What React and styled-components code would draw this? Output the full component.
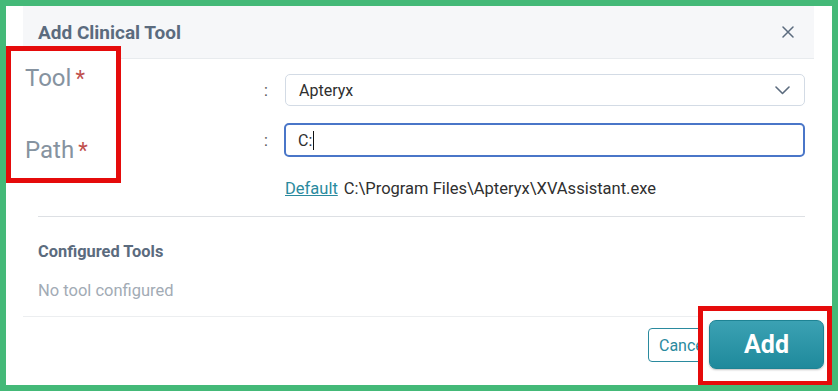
import React from 'react'
import styled, { createGlobalStyle } from 'styled-components'

const GlobalStyles = createGlobalStyle`
  * { box-sizing: border-box; }
  body {
    margin: 0;
    font-family: Roboto, "Liberation Sans", Arial, sans-serif;
    background: #ffffff;
  }
`

const Frame = styled.div`
  position: relative;
  width: 838px;
  height: 391px;
  border: 6px solid #44b978;
  background: #ffffff;
  overflow: hidden;
`

const Modal = styled.div`
  margin-left: 17px;
  width: 791px;
  display: flex;
  flex-direction: column;
`

const Header = styled.div`
  height: 53px;
  display: flex;
  align-items: center;
  justify-content: space-between;
  padding: 0 19px 0 15px;
  background: #f6f7f9;
  border-bottom: 1px solid #e8ebee;
`

const Title = styled.h2`
  margin: 0;
  font-size: 19px;
  font-weight: 700;
  color: #5b6b7e;
`

const CloseButton = styled.button`
  display: flex;
  align-items: center;
  justify-content: center;
  width: 14px;
  height: 14px;
  padding: 0;
  border: 0;
  background: none;
  cursor: pointer;
`

const Form = styled.div`
  display: flex;
  flex-direction: column;
  gap: 17px;
  padding: 15px 9px 0 241px;
`

const Row = styled.div`
  display: flex;
  align-items: center;
`

const Colon = styled.span`
  width: 21px;
  font-size: 16px;
  color: #555;
`

const Select = styled.div`
  flex: 1;
  height: 32px;
  display: flex;
  align-items: center;
  justify-content: space-between;
  padding: 0 14px 0 13px;
  border: 1px solid #d3dbe5;
  border-radius: 5px;
  font-size: 16px;
  color: #2f2f2f;
`

const TextField = styled.div`
  flex: 1;
  height: 34px;
  display: flex;
  align-items: center;
  margin-left: -1px;
  padding: 0 12px;
  border: 2px solid #4a76c8;
  border-radius: 5px;
  font-size: 16px;
  color: #2f2f2f;
`

const Caret = styled.span`
  display: inline-block;
  width: 1px;
  height: 19px;
  margin-left: 1px;
  background: #111;
`

const Hint = styled.div`
  margin: 22px 0 0 262px;
  font-size: 16.5px;
  line-height: 20px;
  color: #2f2f2f;
`

const DefaultLink = styled.a`
  color: #2a8a9e;
  text-decoration: underline;
  margin-right: 6px;
`

const Divider = styled.hr`
  margin: ${p => p.$inset ? '17px 9px 0 15px' : '0'};
  border: 0;
  border-top: 1px solid ${p => p.$inset ? '#dde0e4' : '#eceef0'};
`

const Section = styled.div`
  padding: 25px 15px 16px;
`

const SectionTitle = styled.h3`
  margin: 0;
  font-size: 16.4px;
  font-weight: 700;
  color: #5b6b7e;
`

const Empty = styled.p`
  margin: 20px 0 0;
  font-size: 16.5px;
  color: #a2abb5;
`

const Footer = styled.div`
  display: flex;
  padding: 11px 0 0 625px;
`

const CancelButton = styled.button`
  height: 34px;
  padding: 0 10px;
  border: 1px solid #2a8a9e;
  border-radius: 4px;
  background: #fff;
  font-family: inherit;
  font-size: 16px;
  color: #2a8a9e;
`

const Callout = styled.div`
  position: absolute;
  border: 5px solid #e50b0b;
  background: #ffffff;
`

const LabelBox = styled(Callout)`
  left: 0;
  top: 40px;
  width: 115px;
  height: 137px;
  padding: 12px 0 0 14px;
  display: flex;
  flex-direction: column;
  gap: 41px;
`

const Label = styled.div`
  font-size: 24px;
  line-height: 30px;
  color: #8693a0;
`

const Star = styled.span`
  margin-left: 4px;
  color: #c0504d;
  font-size: 22px;
`

const ButtonBox = styled(Callout)`
  left: 692px;
  top: 300px;
  width: 134px;
  height: 80px;
  padding: 9px 0 0 6px;
`

const AddButton = styled.button`
  width: 115px;
  height: 49px;
  border: 1px solid #1d8394;
  border-radius: 7px;
  background: linear-gradient(#3ba1b3, #1f8a9c);
  box-shadow: 0 1px 2px rgba(0, 0, 0, 0.25);
  font-family: inherit;
  font-size: 25px;
  font-weight: 700;
  color: #ffffff;
`

const CloseIcon = () => (
  <svg width="12" height="12" viewBox="0 0 12 12">
    <path d="M1 1 L11 11 M11 1 L1 11" stroke="#5b6b7e" strokeWidth="1.5" strokeLinecap="round" />
  </svg>
)

const Chevron = () => (
  <svg width="15" height="9" viewBox="0 0 15 9">
    <path d="M1 1 L7.5 7.5 L14 1" fill="none" stroke="#5b6b7e" strokeWidth="1.6" strokeLinecap="round" strokeLinejoin="round" />
  </svg>
)

export default function App() {
  return (
    <>
      <GlobalStyles />
      <Frame>
        <Modal>
          <Header>
            <Title>Add Clinical Tool</Title>
            <CloseButton aria-label="Close"><CloseIcon /></CloseButton>
          </Header>
          <Form>
            <Row>
              <Colon>:</Colon>
              <Select>Apteryx<Chevron /></Select>
            </Row>
            <Row>
              <Colon>:</Colon>
              <TextField>C:<Caret /></TextField>
            </Row>
          </Form>
          <Hint>
            <DefaultLink href="#">Default</DefaultLink>
            C:\Program Files\Apteryx\XVAssistant.exe
          </Hint>
          <Divider $inset />
          <Section>
            <SectionTitle>Configured Tools</SectionTitle>
            <Empty>No tool configured</Empty>
          </Section>
          <Divider />
          <Footer>
            <CancelButton>Cancel</CancelButton>
          </Footer>
        </Modal>
        <LabelBox>
          <Label>Tool<Star>*</Star></Label>
          <Label>Path<Star>*</Star></Label>
        </LabelBox>
        <ButtonBox>
          <AddButton>Add</AddButton>
        </ButtonBox>
      </Frame>
    </>
  )
}
